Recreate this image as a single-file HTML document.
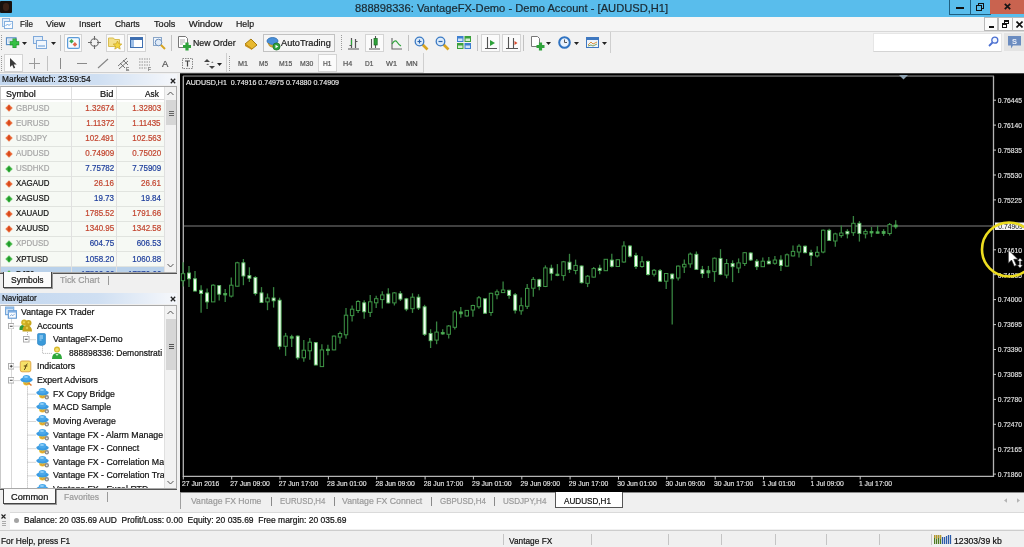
<!DOCTYPE html>
<html><head><meta charset="utf-8"><title>888898336: VantageFX-Demo - Demo Account - [AUDUSD,H1]</title>
<style>
*{box-sizing:border-box;margin:0;padding:0}
html,body{width:1024px;height:547px;overflow:hidden;background:#f0f0f0;font-family:"Liberation Sans",sans-serif;font-size:9.5px;color:#111}
.abs,#root *{position:absolute}
#root{position:relative;width:1024px;height:547px;overflow:hidden;background:#f0f0f0;filter:blur(.3px)}
#root span,#root div{white-space:nowrap}
#root span{-webkit-text-stroke:.22px currentColor}
/* title */
#title{left:0;top:0;width:1024px;height:16.600px;background:#59bdec}
#title .t{left:0;width:1024px;text-align:center;top:1px;font-size:11.4px;color:#1b2a33;letter-spacing:0}
#appicon{left:0;top:1px;width:12px;height:12px;background:#17110d;border-radius:1px}
.wb{top:0;height:14.500px;border:1px solid #1f5f80;border-top:none}
/* menu */
#menu{left:0;top:16.600px;width:1024px;height:15.400px;background:#f5f5f5;border-bottom:1px solid #d8d8d8}
#menu span{top:2px;font-size:9.6px;color:#1a1a1a}
.mdib{top:17px;height:14px;background:#fbfbfb;border:1px solid #b9b9b9}
/* toolbars */
#tb1{left:0;top:32px;width:1024px;height:21px;background:#f2f2f2}
#tb2{left:0;top:53px;width:1024px;height:20px;background:#f2f2f2}
.sep{width:1px;background:#c2c2c2}
.grip{width:2px;border-left:1px dotted #9a9a9a}
.tbtxt{font-size:9.6px;color:#1a1a1a}
.tf{font-size:7.6px;color:#555;top:6px}
.pressed{background:#fbfbfb;border:1px solid #d4d4d4}
/* market watch */
.phead{left:0;width:177px;height:11.500px;background:linear-gradient(90deg,#c3d7ef 0%,#cfdff2 55%,#f2f5fa 95%,#f4f6fa 100%);font-size:9.4px}
.phead span{left:2px;top:0px;color:#111}
.phead .x{left:168px;top:-1px;font-size:9px;font-weight:bold;color:#222}
#mw{left:0;top:86px;width:177px;height:186.500px;background:#fff;border:1px solid #a9a9a9;border-left:1px solid #c9c9c9;overflow:hidden}
#mwh{left:0;top:0;width:163px;height:13px;background:#fff;border-bottom:1px solid #d9d9d9}
#mwh span{top:1px;font-size:9.4px;color:#111}
.mwr{left:0;width:163px;height:15.04px;border-bottom:1px solid #e1e4df;background:#f6f9f4}
.mwr span{top:1.500px;font-size:9.2px}
.mwr .ar{left:3.500px;top:2.800px;width:8px;height:8px}
.mwr .sy{left:15px}
.mwr .bd{right:49.800px;transform:scaleX(.87);transform-origin:100% 0}
.mwr .ak{right:3.100px;transform:scaleX(.87);transform-origin:100% 0}
.vl{width:1px;background:#e0e0e0}
.sb{background:#f2f2f2;border-left:1px solid #e0e0e0}
.thumb{background:#d6d6d6}
.tab{font-size:9.6px}
/* chart */
#chart{left:180px;top:73px;width:844px;height:420px;background:#000}
svg text{font-family:"Liberation Sans",sans-serif}
.pl{font-size:7.6px;fill:#e6e6e6;stroke:#e6e6e6;stroke-width:.15px}
.ax{stroke:#c8c8c8;stroke-width:1}
#cd line{stroke:#378340;stroke-width:1.300}
#cd .f{fill:#f2fff2;stroke:#58b860;stroke-width:.9}
#cd .d{fill:#55b35c;stroke:#4aa851;stroke-width:.8}
#cd .h{fill:#000;stroke:#3d9445;stroke-width:1}
/* navigator */
#nav{left:0;top:304.700px;width:177px;height:184.500px;background:#fff;border:1px solid #a9a9a9;border-left:1px solid #c9c9c9;overflow:hidden}
.nr{left:-1.5px;width:164px;height:14px}
.nr .nt{top:2px;font-size:9.4px;color:#111}
.nr .nic{top:.5px;width:14px;height:13px}
.nr .ni{left:0;top:0;width:14px;height:13px}
.nr .exs{top:4px;width:6.500px;height:6.500px}
/* bottom */
#ctabs{left:180px;top:493px;width:844px;height:16px;background:#f0f0f0;border-left:1px solid #a0a0a0}
#ctabs span{top:2px;font-size:9.6px;color:#9a9a9a}
#term{left:0;top:509px;width:1024px;height:21.500px;background:#f0f0f0;border-bottom:1px solid #cdcdcd}
#term span{top:4px;font-size:9.2px;color:#111}
#status{left:0;top:531px;width:1024px;height:16px;background:#f0f0f0}
#status span{top:3px;font-size:9.4px;color:#111}
</style></head><body>
<div id="root">

<!-- TITLE BAR -->
<div id="title">
  <div id="appicon"><div style="left:3px;top:2px;width:6px;height:8px;border-radius:3px;background:#3a2216"></div></div>
  <span style="left:355.4px;top:1.5px;font-size:10.9px;color:#1b2a33;transform:scaleX(1.023);transform-origin:0 0;">888898336: VantageFX-Demo - Demo Account - [AUDUSD,H1]</span>
  <div class="wb" style="left:949px;width:22px;background:#59bdec"><div style="left:6px;top:7px;width:8px;height:2px;background:#111"></div></div>
  <div class="wb" style="left:970px;width:21px;background:#59bdec">
    <div style="left:7px;top:3px;width:6px;height:6px;border:1px solid #111"></div>
    <div style="left:5px;top:5px;width:6px;height:6px;border:1.500px solid #111;background:#59bdec"></div>
  </div>
  <div class="wb" style="left:990px;width:34px;background:#c9634f;border-color:#c9634f;height:13.500px">
    <svg style="left:13px;top:3px;width:7px;height:7px" viewBox="0 0 7 7"><path d="M.8 .8 L6.200 6.200 M6.200 .8 L.8 6.200" stroke="#151515" stroke-width="1.700"/></svg>
  </div>
</div>

<!-- MENU BAR -->
<div id="menu">
  <svg style="left:2px;top:1.500px;width:11px;height:11px" viewBox="0 0 11 11"><rect x=".5" y=".5" width="7" height="8" fill="#e3eefa" stroke="#8fb8e2"/><rect x="2.500" y="3.500" width="8" height="7" fill="#fafcff" stroke="#86b0de"/><path d="M3.500 8 l2 -2 l1.500 1.500 l2 -2" stroke="#4a90d9" fill="none" stroke-width=".8"/></svg>
  <span style="left:19.5px;top:1.500px;font-size:9.5px;color:#1a1a1a;transform:scaleX(0.849);transform-origin:0 0;">File</span>
  <span style="left:46.2px;top:1.500px;font-size:9.5px;color:#1a1a1a;transform:scaleX(0.945);transform-origin:0 0;">View</span>
  <span style="left:78.7px;top:1.500px;font-size:9.5px;color:#1a1a1a;transform:scaleX(0.918);transform-origin:0 0;">Insert</span>
  <span style="left:114.5px;top:1.500px;font-size:9.5px;color:#1a1a1a;transform:scaleX(0.883);transform-origin:0 0;">Charts</span>
  <span style="left:153.7px;top:1.500px;font-size:9.5px;color:#1a1a1a;transform:scaleX(0.960);transform-origin:0 0;">Tools</span>
  <span style="left:188.7px;top:1.500px;font-size:9.5px;color:#1a1a1a;transform:scaleX(1.000);transform-origin:0 0;">Window</span>
  <span style="left:235.7px;top:1.500px;font-size:9.5px;color:#1a1a1a;transform:scaleX(0.921);transform-origin:0 0;">Help</span>
</div>
<div class="mdib" style="left:984px;width:14px"><div style="left:4px;top:8px;width:5px;height:2px;background:#111"></div></div>
<div class="mdib" style="left:998px;width:15px">
  <div style="left:5px;top:2px;width:5px;height:4px;border:1px solid #111;border-top-width:2px"></div>
  <div style="left:3px;top:5px;width:5px;height:5px;border:1px solid #111;border-top-width:2px;background:#fbfbfb"></div>
</div>
<div class="mdib" style="left:1012px;width:13px"><svg style="left:3px;top:3px;width:7px;height:7px" viewBox="0 0 7 7"><path d="M.5 .5 L6.500 6.500 M6.500 .5 L.5 6.500" stroke="#111" stroke-width="1.600"/></svg></div>

<!-- TOOLBAR 1 -->
<div id="tb1">
  <div class="grip" style="left:1px;top:3px;height:15px"></div>
  <!-- new chart -->
  <svg style="left:5px;top:4px;width:16px;height:15px" viewBox="0 0 16 15"><rect x="1.500" y="1.800" width="9.500" height="6.800" fill="#f4f8fd" stroke="#5b8fc7" stroke-width="1.200"/><path d="M3 4 h4 M3 6 h2" stroke="#9ab8dc" stroke-width=".8"/><path d="M4.800 7.200 h9.400 M9.500 2.500 v9.400" stroke="#1f8a2a" stroke-width="4"/><path d="M5.300 7.200 h8.400 M9.500 3 v8.400" stroke="#35c044" stroke-width="2.800"/></svg>
  <svg style="left:22px;top:10px;width:5px;height:3px" viewBox="0 0 5 3"><path d="M0 0 h5 l-2.500 3z" fill="#222"/></svg>
  <!-- profiles -->
  <svg style="left:33px;top:4px;width:15px;height:14px" viewBox="0 0 15 14"><rect x=".5" y=".5" width="9" height="7" fill="#e2edf9" stroke="#7fa9da"/><rect x="3.500" y="4.500" width="10" height="8" fill="#f2f7fd" stroke="#7fa9da"/><rect x="5" y="9" width="7" height="2" fill="#a9c8ea"/></svg>
  <svg style="left:51px;top:10px;width:5px;height:3px" viewBox="0 0 5 3"><path d="M0 0 h5 l-2.500 3z" fill="#222"/></svg>
  <div class="sep" style="left:60px;top:3px;height:16px"></div>
  <!-- market watch pressed -->
  <div class="pressed" style="left:64px;top:2px;width:18px;height:18px"></div>
  <svg style="left:67px;top:5px;width:13px;height:12px" viewBox="0 0 13 12"><rect x=".6" y=".6" width="11.800" height="10.800" rx="1.500" fill="#f6faff" stroke="#5b9bd8" stroke-width="1.200"/><path d="M2.200 4.300 l2.300 -2.300 l2.300 2.300 l-2.300 2.300z" fill="#3aa848"/><path d="M5.600 7.400 l2.300 -2.300 l2.300 2.300 l-2.300 2.300z" fill="#e0684a"/></svg>
  <!-- data window (crosshair circle) -->
  <svg style="left:88px;top:4px;width:13px;height:13px" viewBox="0 0 13 13"><circle cx="6.500" cy="6.500" r="3.800" fill="none" stroke="#6a6a6a" stroke-width="1.100"/><path d="M6.500 0 v4 M6.500 9 v4 M0 6.500 h4 M9 6.500 h4" stroke="#6a6a6a" stroke-width="1.100"/></svg>
  <!-- navigator (pressed, folder star) -->
  <div class="pressed" style="left:106px;top:2px;width:19px;height:18px"></div>
  <svg style="left:108px;top:4px;width:15px;height:14px" viewBox="0 0 15 14"><path d="M.5 2 h5 l1 1.500 h5 v7 h-11z" fill="#f4e08a" stroke="#d8bc50"/><path d="M9.500 5 l1.300 2.800 3 .3 -2.300 2 .7 3 -2.700 -1.600 -2.700 1.600 .7 -3 -2.300 -2 3 -.3z" fill="#f2d43c" stroke="#c8a020" stroke-width=".7"/></svg>
  <!-- terminal (pressed) -->
  <div class="pressed" style="left:127px;top:2px;width:19px;height:18px"></div>
  <svg style="left:130px;top:5px;width:13px;height:12px" viewBox="0 0 13 12"><rect x=".5" y=".5" width="12" height="10" fill="#fff" stroke="#3f6fb0"/><rect x="1" y="1" width="11" height="2" fill="#3f6fb0"/><rect x="1" y="3" width="3" height="7" fill="#9fc0e8"/></svg>
  <!-- strategy tester -->
  <svg style="left:152px;top:4px;width:14px;height:14px" viewBox="0 0 14 14"><rect x="1.500" y="1.500" width="8" height="8" fill="#eef4fb" stroke="#8aa6c8"/><circle cx="6.500" cy="6.500" r="3.300" fill="#dfeaf7" stroke="#6a8fbf"/><path d="M9 9 l4 4" stroke="#d9a520" stroke-width="2"/></svg>
  <div class="sep" style="left:171px;top:3px;height:16px"></div>
  <!-- new order -->
  <svg style="left:178px;top:4px;width:14px;height:15px" viewBox="0 0 14 15"><path d="M.5 .5 h7 l2 2 v9 h-9z" fill="#fff" stroke="#777"/><path d="M2 4 h5 M2 6 h5 M2 8 h3" stroke="#999" stroke-width=".8"/><path d="M5 10.500 h8 M9 6.500 v8" stroke="#2ea23a" stroke-width="3.200"/></svg>
  <span style="left:193.0px;top:4.5px;font-size:9.4px;color:#1a1a1a;transform:scaleX(0.940);transform-origin:0 0;">New Order</span>
  <svg style="left:244px;top:6px;width:14px;height:12px" viewBox="0 0 14 12"><path d="M1 6 l6 -5 6 6 -5 4z" fill="#e8b930" stroke="#a87c10"/><path d="M1 6 v2 l7 4 v-1.500z" fill="#c89018"/></svg>
  <!-- autotrading -->
  <div class="pressed" style="left:263px;top:2px;width:72px;height:18px;background:#f6f6f6;border-color:#c2c2c2"></div>
  <svg style="left:266px;top:4px;width:15px;height:15px" viewBox="0 0 15 15"><ellipse cx="6.500" cy="5" rx="5.500" ry="3.500" fill="#4a90d9" stroke="#1c5fa8" stroke-width=".7"/><path d="M2 7 q4.500 5 9 0 l-1.500 3 q-3 2.500 -6 0z" fill="#e8bc3a" stroke="#a87c10" stroke-width=".6"/><circle cx="10.500" cy="10.500" r="3.600" fill="#2ea23a" stroke="#1a6a22" stroke-width=".7"/><path d="M9.500 8.800 v3.400 l2.800 -1.700z" fill="#fff"/></svg>
  <span style="left:281.0px;top:4.5px;font-size:9.4px;color:#1a1a1a;transform:scaleX(0.983);transform-origin:0 0;">AutoTrading</span>
  <div class="grip" style="left:341px;top:3px;height:15px"></div>
  <!-- bar chart -->
  <svg style="left:348px;top:5px;width:11px;height:13px" viewBox="0 0 11 13"><path d="M3.500 1 v10 M1.500 8.500 h2 M7.500 2 v9 M7.500 4.500 h2" stroke="#555" stroke-width="1.200" fill="none"/><path d="M0 12 h11" stroke="#555" stroke-width="1"/><path d="M3.500 3 v5" stroke="#2ea23a" stroke-width="1.200"/></svg>
  <!-- candles pressed -->
  <div class="pressed" style="left:365px;top:2px;width:19px;height:18px"></div>
  <svg style="left:369px;top:4px;width:11px;height:14px" viewBox="0 0 11 14"><path d="M2.500 3 v9 M6.500 0 v12 M0 13 h11" stroke="#555" stroke-width="1.100"/><rect x="5" y="2.500" width="3.200" height="6.500" fill="#2ea23a" stroke="#1a6a22" stroke-width=".7"/></svg>
  <!-- line chart -->
  <svg style="left:390px;top:5px;width:13px;height:13px" viewBox="0 0 13 13"><path d="M2 1 v11 h10" stroke="#666" stroke-width="1.100" fill="none"/><path d="M2 7 q3 -5 5 -2 t4 4" stroke="#2ea23a" stroke-width="1.200" fill="none"/></svg>
  <div class="sep" style="left:408px;top:3px;height:16px"></div>
  <!-- zoom in -->
  <svg style="left:414px;top:4px;width:15px;height:15px" viewBox="0 0 15 15"><path d="M8.500 8.500 l5 5" stroke="#d9a520" stroke-width="2.600"/><circle cx="5.500" cy="5.500" r="4.300" fill="#dcebfa" stroke="#3b7ac4" stroke-width="1.300"/><path d="M3.500 5.500 h4 M5.500 3.500 v4" stroke="#2a64ad" stroke-width="1.200"/></svg>
  <!-- zoom out -->
  <svg style="left:435px;top:4px;width:15px;height:15px" viewBox="0 0 15 15"><path d="M8.500 8.500 l5 5" stroke="#d9a520" stroke-width="2.600"/><circle cx="5.500" cy="5.500" r="4.300" fill="#dcebfa" stroke="#3b7ac4" stroke-width="1.300"/><path d="M3.500 5.500 h4" stroke="#2a64ad" stroke-width="1.200"/></svg>
  <!-- tile -->
  <svg style="left:457px;top:4px;width:14px;height:13px" viewBox="0 0 14 13"><rect x="0" y="0" width="6.500" height="6" fill="#3d7fd0"/><rect x="7.500" y="0" width="6.500" height="6" fill="#3aa03a"/><rect x="0" y="7" width="6.500" height="6" fill="#3aa03a"/><rect x="7.500" y="7" width="6.500" height="6" fill="#3d7fd0"/><rect x="1" y="2.500" width="4.500" height="2.500" fill="#cfe2f6"/><rect x="8.500" y="2.500" width="4.500" height="2.500" fill="#d4ecd2"/><rect x="1" y="9.500" width="4.500" height="2.500" fill="#d4ecd2"/><rect x="8.500" y="9.500" width="4.500" height="2.500" fill="#cfe2f6"/></svg>
  <div class="sep" style="left:477px;top:3px;height:16px"></div>
  <!-- autoscroll pressed -->
  <div class="pressed" style="left:481px;top:2px;width:19px;height:18px"></div>
  <svg style="left:485px;top:5px;width:12px;height:13px" viewBox="0 0 12 13"><path d="M2.500 0 v11 M0 11.500 h12" stroke="#555" stroke-width="1.100"/><path d="M5 3 v6 l5 -3z" fill="#2ea23a"/></svg>
  <!-- chart shift pressed -->
  <div class="pressed" style="left:502px;top:2px;width:19px;height:18px"></div>
  <svg style="left:506px;top:5px;width:12px;height:13px" viewBox="0 0 12 13"><path d="M2.500 0 v11 M7.500 1 v10 M0 11.500 h12" stroke="#555" stroke-width="1.100"/><path d="M8.500 4 v4 l3 -2z" fill="#d9482a"/></svg>
  <div class="sep" style="left:523px;top:3px;height:16px"></div>
  <!-- indicators -->
  <svg style="left:531px;top:4px;width:15px;height:15px" viewBox="0 0 15 15"><path d="M.5 .5 h6 l2 2 v8 h-8z" fill="#fff" stroke="#777"/><path d="M5.500 10.500 h8 M9.500 6.500 v8" stroke="#2ea23a" stroke-width="3.200"/></svg>
  <svg style="left:546px;top:10px;width:5px;height:3px" viewBox="0 0 5 3"><path d="M0 0 h5 l-2.500 3z" fill="#222"/></svg>
  <!-- periods clock -->
  <svg style="left:558px;top:4px;width:13px;height:13px" viewBox="0 0 13 13"><circle cx="6.500" cy="6.500" r="5.300" fill="#e9f2fc" stroke="#2f73c2" stroke-width="2"/><path d="M6.500 3.500 v3 h2.500" stroke="#555" stroke-width="1" fill="none"/></svg>
  <svg style="left:574px;top:10px;width:5px;height:3px" viewBox="0 0 5 3"><path d="M0 0 h5 l-2.500 3z" fill="#222"/></svg>
  <!-- templates -->
  <svg style="left:586px;top:5px;width:13px;height:11px" viewBox="0 0 13 11"><rect x=".5" y=".5" width="12" height="10" fill="#eef4fb" stroke="#3f78c0"/><rect x="1" y="1" width="11" height="2" fill="#3f78c0"/><path d="M2 8 l3 -3 2 2 4 -2" stroke="#d9882a" stroke-width=".9" fill="none"/><path d="M2 9 l3 -1 2 1 4 -2" stroke="#5a8a3a" stroke-width=".8" fill="none"/></svg>
  <svg style="left:602px;top:10px;width:5px;height:3px" viewBox="0 0 5 3"><path d="M0 0 h5 l-2.500 3z" fill="#222"/></svg>
  <div class="sep" style="left:610px;top:0px;height:21px;background:#cfcfcf"></div>
  <div style="left:0;top:20.500px;width:611px;height:1px;background:#cfcfcf"></div>
  <!-- search -->
  <div style="left:873px;top:1px;width:129px;height:18.500px;background:#fff;border:1px solid #e6e6e6;border-bottom-color:#d4d4d4"></div>
  <svg style="left:988px;top:4px;width:11px;height:11px" viewBox="0 0 11 11"><circle cx="6.800" cy="4.200" r="3" fill="#f4f8ff" stroke="#4a6fd0" stroke-width="1.300"/><path d="M4.500 6.500 l-3.500 3.500" stroke="#4a6fd0" stroke-width="1.800"/></svg>
  <div style="left:1004px;top:1px;width:20px;height:18px;background:#e4e4e4"></div>
  <svg style="left:1008px;top:4px;width:13px;height:13px" viewBox="0 0 13 13"><path d="M0 0 h13 v9.500 h-8 l-2 3 v-3 h-3z" fill="#6b8cc0"/><text x="4" y="8" font-size="7.500" font-weight="bold" fill="#e8eef8">S</text></svg>
</div>

<!-- TOOLBAR 2 -->
<div id="tb2">
  <div class="grip" style="left:1px;top:3px;height:15px"></div>
  <div class="pressed" style="left:4px;top:1px;width:19px;height:18px"></div>
  <svg style="left:9px;top:5px;width:8px;height:11px" viewBox="0 0 8 11"><path d="M1 0 v9 l2.200 -2 1.500 3.500 1.500 -.7 -1.500 -3.300 h3z" fill="#3a3a3a"/></svg>
  <svg style="left:29px;top:5px;width:11px;height:11px" viewBox="0 0 11 11"><path d="M5.500 0 v11 M0 5.500 h11" stroke="#999" stroke-width="1"/></svg>
  <div class="sep" style="left:47px;top:3px;height:15px"></div>
  <div style="left:60px;top:5px;width:1px;height:11px;background:#8a8a8a"></div>
  <div style="left:77px;top:10px;width:10px;height:1px;background:#8a8a8a"></div>
  <svg style="left:97px;top:5px;width:12px;height:11px" viewBox="0 0 12 11"><path d="M1 10 L11 1" stroke="#858585" stroke-width="1.100"/></svg>
  <svg style="left:117px;top:4px;width:14px;height:14px" viewBox="0 0 14 14"><path d="M1 9 L10 1 M2 12 L11 4 M3 6 l5 5 M6 3 l5 5" stroke="#666" stroke-width=".9"/><text x="9" y="14" font-size="5" fill="#444">E</text></svg>
  <svg style="left:139px;top:5px;width:13px;height:13px" viewBox="0 0 13 13"><path d="M0 1 h11 M0 4 h11 M0 7 h11 M0 10 h8" stroke="#888" stroke-width=".9" stroke-dasharray="1.500 1"/><text x="9" y="13" font-size="5" fill="#444">F</text></svg>
  <span class="tbtxt" style="left:162px;top:5px;font-size:9.500px;color:#555">A</span>
  <svg style="left:182px;top:5px;width:11px;height:11px" viewBox="0 0 11 11"><rect x=".5" y=".5" width="10" height="10" fill="none" stroke="#888" stroke-dasharray="1.500 1"/><path d="M3 3 h5 M5.500 3 v5.500" stroke="#444" stroke-width="1.200"/></svg>
  <svg style="left:204px;top:6px;width:11px;height:10px" viewBox="0 0 11 10"><path d="M0 3 l3 -3 3 3z" fill="#444"/><path d="M5 7 l3 3 3 -3z" fill="#444"/><path d="M2 6 l2 -1.500 1 1.500z M7 3.500 l1.500 -1 1 1.500z" fill="#666"/></svg>
  <svg style="left:217px;top:10px;width:5px;height:3px" viewBox="0 0 5 3"><path d="M0 0 h5 l-2.500 3z" fill="#222"/></svg>
  <div class="sep" style="left:226px;top:0;height:19px;background:#cfcfcf"></div><div class="grip" style="left:229px;top:3px;height:15px"></div>
  <span style="left:237.5px;top:6px;font-size:7.6px;color:#555;transform:scaleX(0.947);transform-origin:0 0;">M1</span>
  <span style="left:259.0px;top:6px;font-size:7.6px;color:#555;transform:scaleX(0.852);transform-origin:0 0;">M5</span>
  <span style="left:278.5px;top:6px;font-size:7.6px;color:#555;transform:scaleX(0.893);transform-origin:0 0;">M15</span>
  <span style="left:299.7px;top:6px;font-size:7.6px;color:#555;transform:scaleX(0.900);transform-origin:0 0;">M30</span>
  <div class="pressed" style="left:318px;top:1px;width:19px;height:18px"></div>
  <span style="left:323.0px;top:6px;font-size:7.6px;color:#555;transform:scaleX(0.875);transform-origin:0 0;">H1</span>
  <span style="left:343.0px;top:6px;font-size:7.6px;color:#555;transform:scaleX(0.947);transform-origin:0 0;">H4</span>
  <span style="left:365.2px;top:6px;font-size:7.6px;color:#555;transform:scaleX(0.854);transform-origin:0 0;">D1</span>
  <span style="left:385.5px;top:6px;font-size:7.6px;color:#555;transform:scaleX(0.965);transform-origin:0 0;">W1</span>
  <span style="left:405.5px;top:6px;font-size:7.6px;color:#555;transform:scaleX(0.990);transform-origin:0 0;">MN</span>
  <div class="sep" style="left:423px;top:0px;height:19px;background:#cfcfcf"></div>
  <div style="left:0;top:19px;width:424px;height:1px;background:#cfcfcf"></div>
</div>

<!-- MARKET WATCH -->
<div class="phead" style="top:73.500px"><span style="left:2.0px;top:0.5px;font-size:9.2px;color:#111;transform:scaleX(0.911);transform-origin:0 0;">Market Watch: 23:59:54</span><svg style="left:169.500px;top:4px;width:6px;height:6px" viewBox="0 0 6 6"><path d="M.8 .8 L5.200 5.200 M5.200 .8 L.8 5.200" stroke="#222" stroke-width="1.300"/></svg></div>
<div id="mw">
  <div id="mwh"><span style="left:4.9px;top:1.5px;font-size:9.2px;color:#111;transform:scaleX(0.971);transform-origin:0 0;">Symbol</span><span style="left:99.0px;top:1.5px;font-size:9.2px;color:#111;transform:scaleX(1.008);transform-origin:0 0;">Bid</span><span style="left:144.0px;top:1.5px;font-size:9.2px;color:#111;transform:scaleX(0.900);transform-origin:0 0;">Ask</span></div>
  <div style="left:0;top:0px;width:163px;height:184px">
<div class="mwr" style="top:14.60px"><svg class="ar" viewBox="0 0 10 10"><path d="M5 .3 L9.700 5 L5 9.700 L.3 5Z" fill="#ee7a4a"/><path d="M2 4.500 L5 8.500 L8 4.500 L6.200 4.500 L6.200 1.800 L3.800 1.800 L3.800 4.500Z" fill="#d8481c"/></svg><span style="left:14.7px;top:1.5px;font-size:9.2px;color:#a6a6a6;transform:scaleX(0.86);transform-origin:0 0;">GBPUSD</span><span class="bd" style="color:#c2452f">1.32674</span><span class="ak" style="color:#c2452f">1.32803</span></div>
<div class="mwr" style="top:29.64px"><svg class="ar" viewBox="0 0 10 10"><path d="M5 .3 L9.700 5 L5 9.700 L.3 5Z" fill="#ee7a4a"/><path d="M2 4.500 L5 8.500 L8 4.500 L6.200 4.500 L6.200 1.800 L3.800 1.800 L3.800 4.500Z" fill="#d8481c"/></svg><span style="left:14.7px;top:1.5px;font-size:9.2px;color:#a6a6a6;transform:scaleX(0.86);transform-origin:0 0;">EURUSD</span><span class="bd" style="color:#c2452f">1.11372</span><span class="ak" style="color:#c2452f">1.11435</span></div>
<div class="mwr" style="top:44.68px"><svg class="ar" viewBox="0 0 10 10"><path d="M5 .3 L9.700 5 L5 9.700 L.3 5Z" fill="#ee7a4a"/><path d="M2 4.500 L5 8.500 L8 4.500 L6.200 4.500 L6.200 1.800 L3.800 1.800 L3.800 4.500Z" fill="#d8481c"/></svg><span style="left:14.7px;top:1.5px;font-size:9.2px;color:#a6a6a6;transform:scaleX(0.86);transform-origin:0 0;">USDJPY</span><span class="bd" style="color:#c2452f">102.491</span><span class="ak" style="color:#c2452f">102.563</span></div>
<div class="mwr" style="top:59.72px"><svg class="ar" viewBox="0 0 10 10"><path d="M5 .3 L9.700 5 L5 9.700 L.3 5Z" fill="#ee7a4a"/><path d="M2 4.500 L5 8.500 L8 4.500 L6.200 4.500 L6.200 1.800 L3.800 1.800 L3.800 4.500Z" fill="#d8481c"/></svg><span style="left:14.7px;top:1.5px;font-size:9.2px;color:#a6a6a6;transform:scaleX(0.86);transform-origin:0 0;">AUDUSD</span><span class="bd" style="color:#c2452f">0.74909</span><span class="ak" style="color:#c2452f">0.75020</span></div>
<div class="mwr" style="top:74.76px"><svg class="ar" viewBox="0 0 10 10"><path d="M5 .3 L9.700 5 L5 9.700 L.3 5Z" fill="#5cc25c"/><path d="M2 5.500 L5 1.500 L8 5.500 L6.200 5.500 L6.200 8.200 L3.800 8.200 L3.800 5.500Z" fill="#1f9a2c"/></svg><span style="left:14.7px;top:1.5px;font-size:9.2px;color:#a6a6a6;transform:scaleX(0.86);transform-origin:0 0;">USDHKD</span><span class="bd" style="color:#1f3f9c">7.75782</span><span class="ak" style="color:#1f3f9c">7.75909</span></div>
<div class="mwr" style="top:89.80px"><svg class="ar" viewBox="0 0 10 10"><path d="M5 .3 L9.700 5 L5 9.700 L.3 5Z" fill="#ee7a4a"/><path d="M2 4.500 L5 8.500 L8 4.500 L6.200 4.500 L6.200 1.800 L3.800 1.800 L3.800 4.500Z" fill="#d8481c"/></svg><span style="left:14.7px;top:1.5px;font-size:9.2px;color:#111;transform:scaleX(0.86);transform-origin:0 0;">XAGAUD</span><span class="bd" style="color:#c2452f">26.16</span><span class="ak" style="color:#c2452f">26.61</span></div>
<div class="mwr" style="top:104.84px"><svg class="ar" viewBox="0 0 10 10"><path d="M5 .3 L9.700 5 L5 9.700 L.3 5Z" fill="#5cc25c"/><path d="M2 5.500 L5 1.500 L8 5.500 L6.200 5.500 L6.200 8.200 L3.800 8.200 L3.800 5.500Z" fill="#1f9a2c"/></svg><span style="left:14.7px;top:1.5px;font-size:9.2px;color:#111;transform:scaleX(0.86);transform-origin:0 0;">XAGUSD</span><span class="bd" style="color:#1f3f9c">19.73</span><span class="ak" style="color:#1f3f9c">19.84</span></div>
<div class="mwr" style="top:119.88px"><svg class="ar" viewBox="0 0 10 10"><path d="M5 .3 L9.700 5 L5 9.700 L.3 5Z" fill="#ee7a4a"/><path d="M2 4.500 L5 8.500 L8 4.500 L6.200 4.500 L6.200 1.800 L3.800 1.800 L3.800 4.500Z" fill="#d8481c"/></svg><span style="left:14.7px;top:1.5px;font-size:9.2px;color:#111;transform:scaleX(0.86);transform-origin:0 0;">XAUAUD</span><span class="bd" style="color:#c2452f">1785.52</span><span class="ak" style="color:#c2452f">1791.66</span></div>
<div class="mwr" style="top:134.92px"><svg class="ar" viewBox="0 0 10 10"><path d="M5 .3 L9.700 5 L5 9.700 L.3 5Z" fill="#ee7a4a"/><path d="M2 4.500 L5 8.500 L8 4.500 L6.200 4.500 L6.200 1.800 L3.800 1.800 L3.800 4.500Z" fill="#d8481c"/></svg><span style="left:14.7px;top:1.5px;font-size:9.2px;color:#111;transform:scaleX(0.86);transform-origin:0 0;">XAUUSD</span><span class="bd" style="color:#c2452f">1340.95</span><span class="ak" style="color:#c2452f">1342.58</span></div>
<div class="mwr" style="top:149.96px"><svg class="ar" viewBox="0 0 10 10"><path d="M5 .3 L9.700 5 L5 9.700 L.3 5Z" fill="#5cc25c"/><path d="M2 5.500 L5 1.500 L8 5.500 L6.200 5.500 L6.200 8.200 L3.800 8.200 L3.800 5.500Z" fill="#1f9a2c"/></svg><span style="left:14.7px;top:1.5px;font-size:9.2px;color:#a6a6a6;transform:scaleX(0.86);transform-origin:0 0;">XPDUSD</span><span class="bd" style="color:#1f3f9c">604.75</span><span class="ak" style="color:#1f3f9c">606.53</span></div>
<div class="mwr" style="top:165.00px"><svg class="ar" viewBox="0 0 10 10"><path d="M5 .3 L9.700 5 L5 9.700 L.3 5Z" fill="#5cc25c"/><path d="M2 5.500 L5 1.500 L8 5.500 L6.200 5.500 L6.200 8.200 L3.800 8.200 L3.800 5.500Z" fill="#1f9a2c"/></svg><span style="left:14.7px;top:1.5px;font-size:9.2px;color:#111;transform:scaleX(0.86);transform-origin:0 0;">XPTUSD</span><span class="bd" style="color:#1f3f9c">1058.20</span><span class="ak" style="color:#1f3f9c">1060.88</span></div>
<div class="mwr" style="top:180.04px;background:#b9d1ea"><svg class="ar" viewBox="0 0 10 10"><path d="M5 .3 L9.700 5 L5 9.700 L.3 5Z" fill="#5cc25c"/><path d="M2 5.500 L5 1.500 L8 5.500 L6.200 5.500 L6.200 8.200 L3.800 8.200 L3.800 5.500Z" fill="#1f9a2c"/></svg><span style="left:14.7px;top:1.5px;font-size:9.2px;color:#111;transform:scaleX(0.86);transform-origin:0 0;">DJ30</span><span class="bd" style="color:#1f3f9c">17866.00</span><span class="ak" style="color:#1f3f9c">17870.00</span></div>
  </div>
  <div class="vl" style="left:69.500px;top:0;height:187px"></div>
  <div class="vl" style="left:115.300px;top:0;height:187px"></div>
  <div class="sb" style="left:162.500px;top:0;width:13.500px;height:187px">
    <svg style="left:2.500px;top:4px;width:7px;height:5px" viewBox="0 0 7 5"><path d="M.5 4 L3.500 1 L6.500 4" stroke="#555" fill="none" stroke-width="1"/></svg>
    <div class="thumb" style="left:1px;top:12.500px;width:11px;height:25px"></div>
    <div style="left:4px;top:23.500px;width:5px;height:1px;background:#666"></div>
    <div style="left:4px;top:25.500px;width:5px;height:1px;background:#666"></div>
    <div style="left:4px;top:27.500px;width:5px;height:1px;background:#666"></div>
    <svg style="left:2.500px;top:176px;width:7px;height:5px" viewBox="0 0 7 5"><path d="M.5 1 L3.500 4 L6.500 1" stroke="#555" fill="none" stroke-width="1"/></svg>
  </div>
</div>
<!-- MW tabs -->
<div style="left:0;top:272.500px;width:177px;height:20px;background:#f0f0f0;border-top:1px solid #555"></div>
<div style="left:2.500px;top:272px;width:49px;height:15.500px;background:#fbfbfb;border:1px solid #444;border-top:none;box-shadow:1px 1px 0 #999"></div>
<span style="left:10.9px;top:274px;font-size:9.4px;color:#111;transform:scaleX(0.904);transform-origin:0 0;">Symbols</span>
<span style="left:60.0px;top:274px;font-size:9.4px;color:#9a9a9a;transform:scaleX(0.935);transform-origin:0 0;">Tick Chart</span>
<div style="left:107.500px;top:275.600px;width:1px;height:9.500px;background:#9a9a9a"></div>

<!-- NAVIGATOR -->
<div class="phead" style="top:292.800px"><span style="left:2.4px;top:0.5px;font-size:9.2px;color:#111;transform:scaleX(0.881);transform-origin:0 0;">Navigator</span><svg style="left:169.500px;top:4px;width:6px;height:6px;margin-top:-1.300px" viewBox="0 0 6 6"><path d="M.8 .8 L5.200 5.200 M5.200 .8 L.8 5.200" stroke="#222" stroke-width="1.300"/></svg></div>
<div id="nav">
<svg style="left:-1px;top:0;width:163px;height:185px" viewBox="0 0 163 185"><g stroke="#b0b0b0" stroke-width="1" stroke-dasharray="1 1" fill="none"><path d="M11.500 12.5 V185"/><path d="M14.500 20.1 H20"/><path d="M14.500 61.0 H20"/><path d="M14.500 74.6 H20"/><path d="M27.500 26.1 V30.2"/><path d="M30.500 33.7 H36"/><path d="M42.500 39.7 V47.4 H52"/><path d="M27.500 80.6 V185"/><path d="M27.500 88.2 H36"/><path d="M27.500 101.8 H36"/><path d="M27.500 115.5 H36"/><path d="M27.500 129.1 H36"/><path d="M27.500 142.7 H36"/><path d="M27.500 156.3 H36"/><path d="M27.500 169.9 H36"/><path d="M27.500 183.6 H36"/></g></svg>
<div class="nr" style="top:-0.70px"><span class="nic" style="left:4.2px"><svg class="ni" viewBox="0 0 13 12"><rect x="1.5" y="1" width="7.5" height="7" fill="#e6f0fb" stroke="#6aa0d8"/><rect x="1.5" y="1" width="7.5" height="2" fill="#8fbbe8"/><rect x="4" y="4.300" width="7.500" height="7" fill="#fbfdff" stroke="#5b94d0"/><rect x="4" y="4.300" width="7.500" height="1.800" fill="#7fb0e4"/><path d="M5.500 9.500 l1.500 -1.500 l1.200 1 l1.800 -1.800" stroke="#6a9ad0" fill="none" stroke-width=".8"/></svg></span><span style="left:21.7px;top:2px;font-size:9.2px;color:#111;transform:scaleX(0.955);transform-origin:0 0;">Vantage FX Trader</span></div>
<div class="nr" style="top:12.92px"><svg class="exs" style="left:8px" viewBox="0 0 7 7"><rect x=".5" y=".5" width="6" height="6" fill="#fff" stroke="#a8a8a8"/><path d="M2 3.500 h3" stroke="#333" stroke-width="1"/></svg><span class="nic" style="left:19.8px"><svg class="ni" viewBox="0 0 14 13"><path d="M0.500 11 q-.5 -4.500 3 -5 q3 .5 2.500 5z" fill="#2e9a38"/><circle cx="5.200" cy="3.600" r="3" fill="#d4b428"/><circle cx="9.500" cy="4" r="3" fill="#c8a820"/><path d="M3.500 12.500 q-.5 -6 4 -6.500 q5.500 .5 5.500 6.500z" fill="#c4a21c"/><circle cx="5" cy="3.200" r="1" fill="#f0dc60"/><circle cx="9.500" cy="3.500" r="1" fill="#ecd650"/><circle cx="8" cy="9" r="1.200" fill="#e4cc48"/></svg></span><span style="left:37.5px;top:2px;font-size:9.2px;color:#111;transform:scaleX(0.955);transform-origin:0 0;">Accounts</span></div>
<div class="nr" style="top:26.54px"><svg class="exs" style="left:23.8px" viewBox="0 0 7 7"><rect x=".5" y=".5" width="6" height="6" fill="#fff" stroke="#a8a8a8"/><path d="M2 3.500 h3" stroke="#333" stroke-width="1"/></svg><span class="nic" style="left:35.8px"><svg class="ni" viewBox="0 0 14 13"><path d="M2.500 1.800 q0 -1.300 1.300 -1.300 h5.400 q1.300 0 1.300 1.300 v8.400 q0 2 -4 2.300 q-4 -.3 -4 -2.300z" fill="#3a9ad9" stroke="#2a7fc0" stroke-width=".6"/><rect x="4.500" y="2.500" width="3.500" height="1" fill="#bfe2fb"/><rect x="4.500" y="4.500" width="3.500" height="1" fill="#bfe2fb"/><rect x="4.500" y="6.500" width="2" height="1" fill="#9fd0f4"/></svg></span><span style="left:53.2px;top:2px;font-size:9.2px;color:#111;transform:scaleX(0.955);transform-origin:0 0;">VantageFX-Demo</span></div>
<div class="nr" style="top:40.16px"><span class="nic" style="left:51.5px"><svg class="ni" viewBox="0 0 14 13"><circle cx="6" cy="3.500" r="3" fill="#d8b82a"/><circle cx="6" cy="3.800" r="1.800" fill="#f2e070"/><path d="M1 13 q0 -6 5 -6 q5 0 5 6z" fill="#2ea83a"/><path d="M4.500 8 l1.500 2 l1.500 -2z" fill="#d8f0d0"/></svg></span><span style="left:69.9px;top:2px;font-size:9.2px;color:#111;transform:scaleX(0.925);transform-origin:0 0;">888898336: Demonstrati</span></div>
<div class="nr" style="top:53.78px"><svg class="exs" style="left:8px" viewBox="0 0 7 7"><rect x=".5" y=".5" width="6" height="6" fill="#fff" stroke="#a8a8a8"/><path d="M2 3.500 h3 M3.500 2 v3" stroke="#333" stroke-width="1"/></svg><span class="nic" style="left:19.6px"><svg class="ni" viewBox="0 0 14 13"><rect x="1.300" y="1" width="10.500" height="10.800" rx="1.800" fill="#f6e068" stroke="#e0a848" stroke-width="1"/><path d="M5 9.800 q1.200 -.2 1.600 -2.800 q.4 -3 2 -3.200 M4.800 6 h3.600" stroke="#5a4410" fill="none" stroke-width="1"/></svg></span><span style="left:37.5px;top:2px;font-size:9.2px;color:#111;transform:scaleX(0.955);transform-origin:0 0;">Indicators</span></div>
<div class="nr" style="top:67.40px"><svg class="exs" style="left:8px" viewBox="0 0 7 7"><rect x=".5" y=".5" width="6" height="6" fill="#fff" stroke="#a8a8a8"/><path d="M2 3.500 h3" stroke="#333" stroke-width="1"/></svg><span class="nic" style="left:20.2px"><svg class="ni" viewBox="0 0 14 13"><path d="M3 8 q0 3.500 3.500 3.500 q3.500 0 3.500 -3.500 l-3.500 -1z" fill="#ecc83a"/><path d="M4.500 9.500 q2 1.500 4 0" stroke="#d8882a" stroke-width="1" fill="none"/><ellipse cx="6.500" cy="5.800" rx="6.200" ry="2.600" fill="#3a9ae0"/><ellipse cx="6.500" cy="3.800" rx="3.800" ry="2.800" fill="#4aa8ea"/><ellipse cx="6" cy="3" rx="2" ry="1" fill="#8fd0f8"/><path d="M8.500 9 l3 2.500" stroke="#e07a30" stroke-width="1.600"/></svg></span><span style="left:37.5px;top:2px;font-size:9.2px;color:#111;transform:scaleX(0.955);transform-origin:0 0;">Expert Advisors</span></div>
<div class="nr" style="top:81.02px"><span class="nic" style="left:36px"><svg class="ni" viewBox="0 0 14 13"><path d="M3 8 q0 3.500 3.500 3.500 q3.500 0 3.500 -3.500 l-3.500 -1z" fill="#ecc83a"/><path d="M4.500 9.500 q2 1.500 4 0" stroke="#d8882a" stroke-width="1" fill="none"/><ellipse cx="6.500" cy="5.800" rx="6.200" ry="2.600" fill="#3a9ae0"/><ellipse cx="6.500" cy="3.800" rx="3.800" ry="2.800" fill="#4aa8ea"/><ellipse cx="6" cy="3" rx="2" ry="1" fill="#8fd0f8"/><circle cx="10.800" cy="10.300" r="2.200" fill="#8a8a8a"/><circle cx="10.800" cy="10.300" r=".9" fill="#e8e8e8"/></svg></span><span style="left:53.2px;top:2px;font-size:9.2px;color:#111;transform:scaleX(0.955);transform-origin:0 0;">FX Copy Bridge</span></div>
<div class="nr" style="top:94.64px"><span class="nic" style="left:36px"><svg class="ni" viewBox="0 0 14 13"><path d="M3 8 q0 3.500 3.500 3.500 q3.500 0 3.500 -3.500 l-3.500 -1z" fill="#ecc83a"/><path d="M4.500 9.500 q2 1.500 4 0" stroke="#d8882a" stroke-width="1" fill="none"/><ellipse cx="6.500" cy="5.800" rx="6.200" ry="2.600" fill="#3a9ae0"/><ellipse cx="6.500" cy="3.800" rx="3.800" ry="2.800" fill="#4aa8ea"/><ellipse cx="6" cy="3" rx="2" ry="1" fill="#8fd0f8"/><circle cx="10.800" cy="10.300" r="2.200" fill="#8a8a8a"/><circle cx="10.800" cy="10.300" r=".9" fill="#e8e8e8"/></svg></span><span style="left:53.2px;top:2px;font-size:9.2px;color:#111;transform:scaleX(0.955);transform-origin:0 0;">MACD Sample</span></div>
<div class="nr" style="top:108.26px"><span class="nic" style="left:36px"><svg class="ni" viewBox="0 0 14 13"><path d="M3 8 q0 3.500 3.500 3.500 q3.500 0 3.500 -3.500 l-3.500 -1z" fill="#ecc83a"/><path d="M4.500 9.500 q2 1.500 4 0" stroke="#d8882a" stroke-width="1" fill="none"/><ellipse cx="6.500" cy="5.800" rx="6.200" ry="2.600" fill="#3a9ae0"/><ellipse cx="6.500" cy="3.800" rx="3.800" ry="2.800" fill="#4aa8ea"/><ellipse cx="6" cy="3" rx="2" ry="1" fill="#8fd0f8"/><circle cx="10.800" cy="10.300" r="2.200" fill="#8a8a8a"/><circle cx="10.800" cy="10.300" r=".9" fill="#e8e8e8"/></svg></span><span style="left:53.2px;top:2px;font-size:9.2px;color:#111;transform:scaleX(0.955);transform-origin:0 0;">Moving Average</span></div>
<div class="nr" style="top:121.88px"><span class="nic" style="left:36px"><svg class="ni" viewBox="0 0 14 13"><path d="M3 8 q0 3.500 3.500 3.500 q3.500 0 3.500 -3.500 l-3.500 -1z" fill="#ecc83a"/><path d="M4.500 9.500 q2 1.500 4 0" stroke="#d8882a" stroke-width="1" fill="none"/><ellipse cx="6.500" cy="5.800" rx="6.200" ry="2.600" fill="#3a9ae0"/><ellipse cx="6.500" cy="3.800" rx="3.800" ry="2.800" fill="#4aa8ea"/><ellipse cx="6" cy="3" rx="2" ry="1" fill="#8fd0f8"/><circle cx="10.800" cy="10.300" r="2.200" fill="#8a8a8a"/><circle cx="10.800" cy="10.300" r=".9" fill="#e8e8e8"/></svg></span><span style="left:53.2px;top:2px;font-size:9.2px;color:#111;transform:scaleX(0.955);transform-origin:0 0;">Vantage FX - Alarm Manage</span></div>
<div class="nr" style="top:135.50px"><span class="nic" style="left:36px"><svg class="ni" viewBox="0 0 14 13"><path d="M3 8 q0 3.500 3.500 3.500 q3.500 0 3.500 -3.500 l-3.500 -1z" fill="#ecc83a"/><path d="M4.500 9.500 q2 1.500 4 0" stroke="#d8882a" stroke-width="1" fill="none"/><ellipse cx="6.500" cy="5.800" rx="6.200" ry="2.600" fill="#3a9ae0"/><ellipse cx="6.500" cy="3.800" rx="3.800" ry="2.800" fill="#4aa8ea"/><ellipse cx="6" cy="3" rx="2" ry="1" fill="#8fd0f8"/><circle cx="10.800" cy="10.300" r="2.200" fill="#8a8a8a"/><circle cx="10.800" cy="10.300" r=".9" fill="#e8e8e8"/></svg></span><span style="left:53.2px;top:2px;font-size:9.2px;color:#111;transform:scaleX(0.955);transform-origin:0 0;">Vantage FX - Connect</span></div>
<div class="nr" style="top:149.12px"><span class="nic" style="left:36px"><svg class="ni" viewBox="0 0 14 13"><path d="M3 8 q0 3.500 3.500 3.500 q3.500 0 3.500 -3.500 l-3.500 -1z" fill="#ecc83a"/><path d="M4.500 9.500 q2 1.500 4 0" stroke="#d8882a" stroke-width="1" fill="none"/><ellipse cx="6.500" cy="5.800" rx="6.200" ry="2.600" fill="#3a9ae0"/><ellipse cx="6.500" cy="3.800" rx="3.800" ry="2.800" fill="#4aa8ea"/><ellipse cx="6" cy="3" rx="2" ry="1" fill="#8fd0f8"/><circle cx="10.800" cy="10.300" r="2.200" fill="#8a8a8a"/><circle cx="10.800" cy="10.300" r=".9" fill="#e8e8e8"/></svg></span><span style="left:53.2px;top:2px;font-size:9.2px;color:#111;transform:scaleX(0.955);transform-origin:0 0;">Vantage FX - Correlation Ma</span></div>
<div class="nr" style="top:162.74px"><span class="nic" style="left:36px"><svg class="ni" viewBox="0 0 14 13"><path d="M3 8 q0 3.500 3.500 3.500 q3.500 0 3.500 -3.500 l-3.500 -1z" fill="#ecc83a"/><path d="M4.500 9.500 q2 1.500 4 0" stroke="#d8882a" stroke-width="1" fill="none"/><ellipse cx="6.500" cy="5.800" rx="6.200" ry="2.600" fill="#3a9ae0"/><ellipse cx="6.500" cy="3.800" rx="3.800" ry="2.800" fill="#4aa8ea"/><ellipse cx="6" cy="3" rx="2" ry="1" fill="#8fd0f8"/><circle cx="10.800" cy="10.300" r="2.200" fill="#8a8a8a"/><circle cx="10.800" cy="10.300" r=".9" fill="#e8e8e8"/></svg></span><span style="left:53.2px;top:2px;font-size:9.2px;color:#111;transform:scaleX(0.955);transform-origin:0 0;">Vantage FX - Correlation Tra</span></div>
<div class="nr" style="top:176.36px"><span class="nic" style="left:36px"><svg class="ni" viewBox="0 0 14 13"><path d="M3 8 q0 3.500 3.500 3.500 q3.500 0 3.500 -3.500 l-3.500 -1z" fill="#ecc83a"/><path d="M4.500 9.500 q2 1.500 4 0" stroke="#d8882a" stroke-width="1" fill="none"/><ellipse cx="6.500" cy="5.800" rx="6.200" ry="2.600" fill="#3a9ae0"/><ellipse cx="6.500" cy="3.800" rx="3.800" ry="2.800" fill="#4aa8ea"/><ellipse cx="6" cy="3" rx="2" ry="1" fill="#8fd0f8"/><circle cx="10.800" cy="10.300" r="2.200" fill="#8a8a8a"/><circle cx="10.800" cy="10.300" r=".9" fill="#e8e8e8"/></svg></span><span style="left:53.2px;top:2px;font-size:9.2px;color:#111;transform:scaleX(0.955);transform-origin:0 0;">Vantage FX - Excel RTD</span></div>
  <div class="sb" style="left:162.500px;top:0;width:13.500px;height:185px">
    <svg style="left:2.500px;top:4.500px;width:7px;height:5px" viewBox="0 0 7 5"><path d="M.5 4 L3.500 1 L6.500 4" stroke="#555" fill="none" stroke-width="1"/></svg>
    <div class="thumb" style="left:1px;top:13.500px;width:11px;height:51px"></div>
    <div style="left:4px;top:38px;width:5px;height:1px;background:#555"></div>
    <div style="left:4px;top:40px;width:5px;height:1px;background:#555"></div>
    <div style="left:4px;top:42px;width:5px;height:1px;background:#555"></div>
    <svg style="left:2.500px;top:174.500px;width:7px;height:5px" viewBox="0 0 7 5"><path d="M.5 1 L3.500 4 L6.500 1" stroke="#555" fill="none" stroke-width="1"/></svg>
  </div>
</div>
<div style="left:0;top:489.200px;width:177px;height:20px;background:#f0f0f0;border-top:1px solid #555"></div>
<div style="left:2.500px;top:488.700px;width:53.500px;height:15px;background:#fbfbfb;border:1px solid #444;border-top:none;box-shadow:1px 1px 0 #999"></div>
<span style="left:10.9px;top:490.800px;font-size:9.4px;color:#111;transform:scaleX(0.981);transform-origin:0 0;">Common</span>
<span style="left:63.9px;top:490.800px;font-size:9.4px;color:#9a9a9a;transform:scaleX(0.911);transform-origin:0 0;">Favorites</span>
<div style="left:107px;top:492.400px;width:1px;height:9.500px;background:#9a9a9a"></div>

<!-- CHART -->
<div id="chart"></div>
<svg id="cs" style="left:0;top:0;width:1024px;height:547px" viewBox="0 0 1024 547">
  <rect x="180" y="73" width="844" height="1" fill="#444"/>
  <path d="M183.300 76 V476.300 H993.500 V76" stroke="#b4b4b4" stroke-width="1.300" fill="none"/>
  <rect x="183" y="75.500" width="811" height="1.100" fill="#8c8c8c"/>
  <path d="M899 75 h9 l-4.500 4.500z" fill="#8fa3b3"/>
  <line x1="184" y1="226" x2="993" y2="226" style="stroke:#808080;stroke-width:1.100"/>
  <text class="pl" x="186" y="84.900" style="fill:#f0f0f0" textLength="153" lengthAdjust="spacingAndGlyphs" xml:space="preserve">AUDUSD,H1  0.74916 0.74975 0.74880 0.74909</text>
<g id="cd">
<line x1="183.0" y1="262.2" x2="183.0" y2="286.5"/>
<rect class="h" x="181.3" y="273.7" width="3.4" height="7.0"/>
<line x1="189.0" y1="266.0" x2="189.0" y2="287.1"/>
<rect class="f" x="187.5" y="273.0" width="3.0" height="5.8"/>
<line x1="195.0" y1="271.1" x2="195.0" y2="291.6"/>
<rect class="f" x="193.5" y="278.8" width="3.0" height="12.2"/>
<line x1="201.1" y1="285.2" x2="201.1" y2="312.7"/>
<rect class="f" x="199.6" y="290.3" width="3.0" height="3.2"/>
<line x1="207.1" y1="288.4" x2="207.1" y2="308.9"/>
<rect class="f" x="205.6" y="292.9" width="3.0" height="9.0"/>
<line x1="213.2" y1="284.3" x2="213.2" y2="301.9"/>
<rect class="h" x="211.5" y="285.2" width="3.4" height="16.7"/>
<line x1="219.2" y1="285.2" x2="219.2" y2="300.6"/>
<rect class="f" x="217.7" y="285.6" width="3.0" height="8.6"/>
<line x1="225.2" y1="289.0" x2="225.2" y2="301.9"/>
<rect class="d" x="223.7" y="293.4" width="3.0" height="1.6"/>
<line x1="231.3" y1="277.5" x2="231.3" y2="297.4"/>
<rect class="h" x="229.6" y="285.2" width="3.4" height="10.9"/>
<line x1="237.3" y1="261.8" x2="237.3" y2="286.5"/>
<rect class="h" x="235.6" y="262.8" width="3.4" height="23.4"/>
<line x1="243.4" y1="259.0" x2="243.4" y2="285.2"/>
<rect class="f" x="241.9" y="262.8" width="3.0" height="13.2"/>
<line x1="249.4" y1="267.3" x2="249.4" y2="282.0"/>
<rect class="f" x="247.9" y="275.6" width="3.0" height="2.6"/>
<line x1="255.4" y1="276.2" x2="255.4" y2="295.5"/>
<rect class="f" x="253.9" y="277.5" width="3.0" height="16.0"/>
<line x1="261.5" y1="287.1" x2="261.5" y2="303.1"/>
<rect class="f" x="260.0" y="292.9" width="3.0" height="9.6"/>
<line x1="267.5" y1="293.5" x2="267.5" y2="310.2"/>
<rect class="h" x="265.8" y="298.0" width="3.4" height="3.9"/>
<line x1="273.6" y1="287.1" x2="273.6" y2="307.6"/>
<rect class="f" x="272.1" y="298.0" width="3.0" height="2.8"/>
<line x1="279.6" y1="297.7" x2="279.6" y2="349.5"/>
<rect class="f" x="278.1" y="300.2" width="3.0" height="46.1"/>
<line x1="285.6" y1="332.9" x2="285.6" y2="355.9"/>
<rect class="h" x="283.9" y="336.1" width="3.4" height="10.2"/>
<line x1="291.7" y1="334.8" x2="291.7" y2="347.0"/>
<rect class="d" x="290.2" y="336.7" width="3.0" height="1.5"/>
<line x1="297.7" y1="335.4" x2="297.7" y2="359.8"/>
<rect class="f" x="296.2" y="336.1" width="3.0" height="21.7"/>
<line x1="303.8" y1="339.9" x2="303.8" y2="361.7"/>
<rect class="h" x="302.1" y="350.2" width="3.4" height="7.6"/>
<line x1="309.8" y1="338.0" x2="309.8" y2="359.8"/>
<rect class="h" x="308.1" y="342.2" width="3.4" height="8.6"/>
<line x1="315.8" y1="342.0" x2="315.8" y2="365.3"/>
<rect class="f" x="314.3" y="342.6" width="3.0" height="22.4"/>
<line x1="321.9" y1="344.2" x2="321.9" y2="366.9"/>
<rect class="h" x="320.2" y="349.9" width="3.4" height="16.7"/>
<line x1="327.9" y1="344.8" x2="327.9" y2="355.3"/>
<rect class="d" x="326.4" y="349.2" width="3.0" height="1.4"/>
<line x1="334.0" y1="335.5" x2="334.0" y2="350.2"/>
<rect class="h" x="332.3" y="336.1" width="3.4" height="13.8"/>
<line x1="340.0" y1="331.6" x2="340.0" y2="343.8"/>
<rect class="h" x="338.3" y="333.5" width="3.4" height="3.6"/>
<line x1="346.0" y1="307.9" x2="346.0" y2="338.7"/>
<rect class="h" x="344.3" y="315.2" width="3.4" height="19.6"/>
<line x1="352.1" y1="305.4" x2="352.1" y2="321.4"/>
<rect class="h" x="350.4" y="309.2" width="3.4" height="6.4"/>
<line x1="358.1" y1="300.2" x2="358.1" y2="313.0"/>
<rect class="h" x="356.4" y="301.5" width="3.4" height="9.0"/>
<line x1="364.2" y1="300.2" x2="364.2" y2="318.8"/>
<rect class="f" x="362.7" y="302.8" width="3.0" height="9.0"/>
<line x1="370.2" y1="295.1" x2="370.2" y2="316.9"/>
<rect class="h" x="368.5" y="301.8" width="3.4" height="10.6"/>
<line x1="376.2" y1="295.8" x2="376.2" y2="307.9"/>
<rect class="h" x="374.5" y="298.7" width="3.4" height="4.1"/>
<line x1="382.3" y1="291.3" x2="382.3" y2="308.6"/>
<rect class="h" x="380.6" y="294.9" width="3.4" height="4.7"/>
<line x1="388.3" y1="288.2" x2="388.3" y2="303.6"/>
<rect class="f" x="386.8" y="294.0" width="3.0" height="8.9"/>
<line x1="394.4" y1="292.0" x2="394.4" y2="305.5"/>
<rect class="h" x="392.7" y="292.9" width="3.4" height="10.0"/>
<line x1="400.4" y1="291.1" x2="400.4" y2="301.0"/>
<rect class="f" x="398.9" y="293.7" width="3.0" height="5.4"/>
<line x1="406.4" y1="297.8" x2="406.4" y2="311.2"/>
<rect class="f" x="404.9" y="298.8" width="3.0" height="10.3"/>
<line x1="412.5" y1="293.3" x2="412.5" y2="312.9"/>
<rect class="h" x="410.8" y="297.2" width="3.4" height="11.5"/>
<line x1="418.5" y1="294.2" x2="418.5" y2="310.0"/>
<rect class="f" x="417.0" y="297.2" width="3.0" height="10.8"/>
<line x1="424.6" y1="304.8" x2="424.6" y2="336.0"/>
<rect class="f" x="423.1" y="306.8" width="3.0" height="27.5"/>
<line x1="430.6" y1="329.2" x2="430.6" y2="348.0"/>
<rect class="f" x="429.1" y="333.4" width="3.0" height="7.3"/>
<line x1="436.6" y1="321.5" x2="436.6" y2="344.2"/>
<rect class="h" x="434.9" y="332.1" width="3.4" height="8.0"/>
<line x1="442.7" y1="329.2" x2="442.7" y2="334.7"/>
<rect class="d" x="441.2" y="332.4" width="3.0" height="1.6"/>
<line x1="448.7" y1="325.0" x2="448.7" y2="338.5"/>
<rect class="h" x="447.0" y="326.0" width="3.4" height="8.3"/>
<line x1="454.8" y1="310.0" x2="454.8" y2="329.6"/>
<rect class="h" x="453.1" y="311.9" width="3.4" height="15.4"/>
<line x1="460.8" y1="307.0" x2="460.8" y2="317.7"/>
<rect class="d" x="459.3" y="311.9" width="3.0" height="1.9"/>
<line x1="466.8" y1="310.0" x2="466.8" y2="316.4"/>
<rect class="h" x="465.1" y="310.4" width="3.4" height="5.6"/>
<line x1="472.9" y1="304.8" x2="472.9" y2="316.8"/>
<rect class="h" x="471.2" y="305.5" width="3.4" height="4.5"/>
<line x1="478.9" y1="295.9" x2="478.9" y2="308.7"/>
<rect class="h" x="477.2" y="297.8" width="3.4" height="9.0"/>
<line x1="485.0" y1="298.4" x2="485.0" y2="313.4"/>
<rect class="f" x="483.5" y="298.8" width="3.0" height="14.4"/>
<line x1="491.0" y1="292.7" x2="491.0" y2="315.7"/>
<rect class="h" x="489.3" y="293.3" width="3.4" height="19.2"/>
<line x1="497.0" y1="289.6" x2="497.0" y2="299.3"/>
<rect class="h" x="495.3" y="291.8" width="3.4" height="2.9"/>
<line x1="503.1" y1="281.4" x2="503.1" y2="292.9"/>
<rect class="h" x="501.4" y="290.0" width="3.4" height="2.6"/>
<line x1="509.1" y1="289.7" x2="509.1" y2="298.7"/>
<rect class="f" x="507.6" y="290.3" width="3.0" height="5.2"/>
<line x1="515.2" y1="292.9" x2="515.2" y2="313.4"/>
<rect class="f" x="513.7" y="294.8" width="3.0" height="15.4"/>
<line x1="521.2" y1="297.4" x2="521.2" y2="314.7"/>
<rect class="h" x="519.5" y="305.7" width="3.4" height="5.1"/>
<line x1="527.2" y1="283.9" x2="527.2" y2="308.9"/>
<rect class="h" x="525.5" y="288.4" width="3.4" height="17.9"/>
<line x1="533.3" y1="276.9" x2="533.3" y2="296.7"/>
<rect class="h" x="531.6" y="279.4" width="3.4" height="8.8"/>
<line x1="539.3" y1="278.8" x2="539.3" y2="290.3"/>
<rect class="f" x="537.8" y="279.7" width="3.0" height="6.8"/>
<line x1="545.4" y1="265.4" x2="545.4" y2="287.1"/>
<rect class="h" x="543.7" y="267.9" width="3.4" height="18.6"/>
<line x1="551.4" y1="264.7" x2="551.4" y2="280.5"/>
<rect class="f" x="549.9" y="268.2" width="3.0" height="5.1"/>
<line x1="557.4" y1="264.1" x2="557.4" y2="276.2"/>
<rect class="d" x="555.9" y="274.1" width="3.0" height="1.5"/>
<line x1="563.5" y1="260.9" x2="563.5" y2="280.7"/>
<rect class="h" x="561.8" y="261.8" width="3.4" height="13.8"/>
<line x1="569.5" y1="253.8" x2="569.5" y2="273.0"/>
<rect class="f" x="568.0" y="262.2" width="3.0" height="7.3"/>
<line x1="575.6" y1="259.6" x2="575.6" y2="274.3"/>
<rect class="h" x="573.9" y="265.4" width="3.4" height="5.1"/>
<line x1="581.6" y1="265.4" x2="581.6" y2="283.5"/>
<rect class="f" x="580.1" y="266.0" width="3.0" height="16.7"/>
<line x1="587.6" y1="275.0" x2="587.6" y2="287.1"/>
<rect class="h" x="585.9" y="276.2" width="3.4" height="7.1"/>
<line x1="593.7" y1="266.9" x2="593.7" y2="277.5"/>
<rect class="h" x="592.0" y="268.6" width="3.4" height="8.5"/>
<line x1="599.7" y1="264.7" x2="599.7" y2="274.3"/>
<rect class="f" x="598.2" y="268.2" width="3.0" height="2.3"/>
<line x1="605.8" y1="259.0" x2="605.8" y2="271.0"/>
<rect class="h" x="604.1" y="259.3" width="3.4" height="11.4"/>
<line x1="611.8" y1="253.7" x2="611.8" y2="267.5"/>
<rect class="f" x="610.3" y="260.1" width="3.0" height="6.2"/>
<line x1="617.8" y1="259.4" x2="617.8" y2="266.9"/>
<rect class="h" x="616.1" y="259.7" width="3.4" height="6.8"/>
<line x1="623.9" y1="241.3" x2="623.9" y2="262.7"/>
<rect class="h" x="622.2" y="246.0" width="3.4" height="16.0"/>
<line x1="629.9" y1="245.1" x2="629.9" y2="257.5"/>
<rect class="f" x="628.4" y="246.0" width="3.0" height="10.2"/>
<line x1="636.0" y1="252.8" x2="636.0" y2="269.0"/>
<rect class="f" x="634.5" y="255.6" width="3.0" height="10.9"/>
<line x1="642.0" y1="256.2" x2="642.0" y2="267.8"/>
<rect class="h" x="640.3" y="261.8" width="3.4" height="4.7"/>
<line x1="648.0" y1="260.5" x2="648.0" y2="275.5"/>
<rect class="f" x="646.5" y="261.4" width="3.0" height="13.2"/>
<line x1="654.1" y1="269.0" x2="654.1" y2="276.4"/>
<rect class="h" x="652.4" y="270.3" width="3.4" height="3.9"/>
<line x1="660.1" y1="269.0" x2="660.1" y2="281.9"/>
<rect class="f" x="658.6" y="270.7" width="3.0" height="10.5"/>
<line x1="666.2" y1="272.9" x2="666.2" y2="288.9"/>
<rect class="h" x="664.5" y="273.5" width="3.4" height="7.7"/>
<line x1="672.2" y1="273.5" x2="672.2" y2="324.4"/>
<rect class="f" x="670.7" y="274.1" width="3.0" height="4.7"/>
<line x1="678.2" y1="265.6" x2="678.2" y2="280.6"/>
<rect class="h" x="676.5" y="266.1" width="3.4" height="11.9"/>
<line x1="684.3" y1="259.4" x2="684.3" y2="272.9"/>
<rect class="h" x="682.6" y="264.3" width="3.4" height="2.6"/>
<line x1="690.3" y1="252.4" x2="690.3" y2="267.8"/>
<rect class="h" x="688.6" y="254.1" width="3.4" height="9.8"/>
<line x1="696.4" y1="251.5" x2="696.4" y2="270.0"/>
<rect class="f" x="694.9" y="254.3" width="3.0" height="15.1"/>
<line x1="702.4" y1="265.9" x2="702.4" y2="278.0"/>
<rect class="f" x="700.9" y="269.7" width="3.0" height="3.8"/>
<line x1="708.4" y1="265.9" x2="708.4" y2="278.0"/>
<rect class="d" x="706.9" y="270.7" width="3.0" height="2.2"/>
<line x1="714.5" y1="257.5" x2="714.5" y2="281.9"/>
<rect class="h" x="712.8" y="258.2" width="3.4" height="13.4"/>
<line x1="720.5" y1="249.2" x2="720.5" y2="275.3"/>
<rect class="f" x="719.0" y="258.4" width="3.0" height="16.1"/>
<line x1="726.6" y1="259.0" x2="726.6" y2="278.3"/>
<rect class="h" x="724.9" y="263.5" width="3.4" height="11.6"/>
<line x1="732.6" y1="260.3" x2="732.6" y2="282.1"/>
<rect class="f" x="731.1" y="263.5" width="3.0" height="3.2"/>
<line x1="738.6" y1="258.4" x2="738.6" y2="273.1"/>
<rect class="h" x="736.9" y="262.9" width="3.4" height="5.1"/>
<line x1="744.7" y1="252.0" x2="744.7" y2="266.1"/>
<rect class="h" x="743.0" y="252.7" width="3.4" height="10.8"/>
<line x1="750.7" y1="252.3" x2="750.7" y2="261.0"/>
<rect class="f" x="749.2" y="253.0" width="3.0" height="7.0"/>
<line x1="756.8" y1="259.0" x2="756.8" y2="270.0"/>
<rect class="f" x="755.3" y="261.2" width="3.0" height="5.5"/>
<line x1="762.8" y1="257.4" x2="762.8" y2="266.7"/>
<rect class="h" x="761.1" y="261.2" width="3.4" height="5.5"/>
<line x1="768.8" y1="257.1" x2="768.8" y2="264.2"/>
<rect class="f" x="767.3" y="261.2" width="3.0" height="2.6"/>
<line x1="774.9" y1="256.1" x2="774.9" y2="264.8"/>
<rect class="h" x="773.2" y="260.0" width="3.4" height="3.3"/>
<line x1="780.9" y1="255.2" x2="780.9" y2="271.0"/>
<rect class="f" x="779.4" y="260.0" width="3.0" height="5.5"/>
<line x1="787.0" y1="253.5" x2="787.0" y2="266.7"/>
<rect class="h" x="785.3" y="254.8" width="3.4" height="11.3"/>
<line x1="793.0" y1="245.4" x2="793.0" y2="256.5"/>
<rect class="h" x="791.3" y="251.4" width="3.4" height="4.5"/>
<line x1="799.0" y1="244.3" x2="799.0" y2="257.4"/>
<rect class="h" x="797.3" y="246.2" width="3.4" height="5.8"/>
<line x1="805.1" y1="245.6" x2="805.1" y2="253.3"/>
<rect class="f" x="803.6" y="246.2" width="3.0" height="6.5"/>
<line x1="811.1" y1="249.7" x2="811.1" y2="266.1"/>
<rect class="f" x="809.6" y="252.7" width="3.0" height="2.5"/>
<line x1="817.2" y1="246.2" x2="817.2" y2="257.4"/>
<rect class="h" x="815.5" y="252.3" width="3.4" height="3.6"/>
<line x1="823.2" y1="229.6" x2="823.2" y2="253.3"/>
<rect class="h" x="821.5" y="230.2" width="3.4" height="21.8"/>
<line x1="829.2" y1="228.7" x2="829.2" y2="241.0"/>
<rect class="f" x="827.7" y="230.3" width="3.0" height="10.2"/>
<line x1="835.3" y1="232.7" x2="835.3" y2="246.7"/>
<rect class="h" x="833.6" y="233.9" width="3.4" height="7.1"/>
<line x1="841.3" y1="225.6" x2="841.3" y2="237.8"/>
<rect class="h" x="839.6" y="233.0" width="3.4" height="2.6"/>
<line x1="847.4" y1="229.2" x2="847.4" y2="238.4"/>
<rect class="f" x="845.9" y="231.4" width="3.0" height="2.5"/>
<line x1="853.4" y1="216.0" x2="853.4" y2="235.9"/>
<rect class="h" x="851.7" y="223.3" width="3.4" height="9.4"/>
<line x1="859.4" y1="221.1" x2="859.4" y2="241.6"/>
<rect class="f" x="857.9" y="223.3" width="3.0" height="10.2"/>
<line x1="865.5" y1="229.2" x2="865.5" y2="238.4"/>
<rect class="h" x="863.8" y="231.4" width="3.4" height="2.5"/>
<line x1="871.5" y1="226.9" x2="871.5" y2="237.1"/>
<rect class="d" x="870.0" y="231.4" width="3.0" height="1.6"/>
<line x1="877.6" y1="225.6" x2="877.6" y2="233.3"/>
<rect class="d" x="876.1" y="231.8" width="3.0" height="1.5"/>
<line x1="883.6" y1="229.2" x2="883.6" y2="235.9"/>
<rect class="d" x="882.1" y="231.4" width="3.0" height="2.1"/>
<line x1="889.6" y1="223.0" x2="889.6" y2="235.6"/>
<rect class="h" x="887.9" y="224.6" width="3.4" height="8.9"/>
<line x1="895.7" y1="220.2" x2="895.7" y2="228.8"/>
<rect class="d" x="894.2" y="225.0" width="3.0" height="1.9"/>
</g>
<line class="ax" x1="993" y1="100.2" x2="996" y2="100.2"/><text class="pl" x="997.8" y="103.0" textLength="24.2" lengthAdjust="spacingAndGlyphs">0.76445</text>
<line class="ax" x1="993" y1="125.1" x2="996" y2="125.1"/><text class="pl" x="997.8" y="127.9" textLength="24.2" lengthAdjust="spacingAndGlyphs">0.76140</text>
<line class="ax" x1="993" y1="150.1" x2="996" y2="150.1"/><text class="pl" x="997.8" y="152.9" textLength="24.2" lengthAdjust="spacingAndGlyphs">0.75835</text>
<line class="ax" x1="993" y1="175.0" x2="996" y2="175.0"/><text class="pl" x="997.8" y="177.8" textLength="24.2" lengthAdjust="spacingAndGlyphs">0.75530</text>
<line class="ax" x1="993" y1="199.9" x2="996" y2="199.9"/><text class="pl" x="997.8" y="202.7" textLength="24.2" lengthAdjust="spacingAndGlyphs">0.75225</text>
<line class="ax" x1="993" y1="249.8" x2="996" y2="249.8"/><text class="pl" x="997.8" y="252.6" textLength="24.2" lengthAdjust="spacingAndGlyphs">0.74610</text>
<line class="ax" x1="993" y1="274.7" x2="996" y2="274.7"/><text class="pl" x="997.8" y="277.5" textLength="24.2" lengthAdjust="spacingAndGlyphs">0.74305</text>
<line class="ax" x1="993" y1="299.6" x2="996" y2="299.6"/><text class="pl" x="997.8" y="302.4" textLength="24.2" lengthAdjust="spacingAndGlyphs">0.74000</text>
<line class="ax" x1="993" y1="324.6" x2="996" y2="324.6"/><text class="pl" x="997.8" y="327.4" textLength="24.2" lengthAdjust="spacingAndGlyphs">0.73695</text>
<line class="ax" x1="993" y1="349.5" x2="996" y2="349.5"/><text class="pl" x="997.8" y="352.3" textLength="24.2" lengthAdjust="spacingAndGlyphs">0.73390</text>
<line class="ax" x1="993" y1="374.4" x2="996" y2="374.4"/><text class="pl" x="997.8" y="377.2" textLength="24.2" lengthAdjust="spacingAndGlyphs">0.73085</text>
<line class="ax" x1="993" y1="399.4" x2="996" y2="399.4"/><text class="pl" x="997.8" y="402.2" textLength="24.2" lengthAdjust="spacingAndGlyphs">0.72780</text>
<line class="ax" x1="993" y1="424.3" x2="996" y2="424.3"/><text class="pl" x="997.8" y="427.1" textLength="24.2" lengthAdjust="spacingAndGlyphs">0.72470</text>
<line class="ax" x1="993" y1="449.2" x2="996" y2="449.2"/><text class="pl" x="997.8" y="452.0" textLength="24.2" lengthAdjust="spacingAndGlyphs">0.72165</text>
<line class="ax" x1="993" y1="474.1" x2="996" y2="474.1"/><text class="pl" x="997.8" y="476.9" textLength="24.2" lengthAdjust="spacingAndGlyphs">0.71860</text>
<line class="ax" x1="183.3" y1="476" x2="183.3" y2="479.5"/><text class="pl" x="182.0" y="486.3" textLength="37.4" lengthAdjust="spacingAndGlyphs">27 Jun 2016</text>
<line class="ax" x1="231.7" y1="476" x2="231.7" y2="479.5"/><text class="pl" x="230.3" y="486.3" textLength="39.5" lengthAdjust="spacingAndGlyphs">27 Jun 09:00</text>
<line class="ax" x1="280.0" y1="476" x2="280.0" y2="479.5"/><text class="pl" x="278.7" y="486.3" textLength="39.5" lengthAdjust="spacingAndGlyphs">27 Jun 17:00</text>
<line class="ax" x1="328.4" y1="476" x2="328.4" y2="479.5"/><text class="pl" x="327.1" y="486.3" textLength="39.5" lengthAdjust="spacingAndGlyphs">28 Jun 01:00</text>
<line class="ax" x1="376.7" y1="476" x2="376.7" y2="479.5"/><text class="pl" x="375.4" y="486.3" textLength="39.5" lengthAdjust="spacingAndGlyphs">28 Jun 09:00</text>
<line class="ax" x1="425.1" y1="476" x2="425.1" y2="479.5"/><text class="pl" x="423.8" y="486.3" textLength="39.5" lengthAdjust="spacingAndGlyphs">28 Jun 17:00</text>
<line class="ax" x1="473.4" y1="476" x2="473.4" y2="479.5"/><text class="pl" x="472.1" y="486.3" textLength="39.5" lengthAdjust="spacingAndGlyphs">29 Jun 01:00</text>
<line class="ax" x1="521.8" y1="476" x2="521.8" y2="479.5"/><text class="pl" x="520.5" y="486.3" textLength="39.5" lengthAdjust="spacingAndGlyphs">29 Jun 09:00</text>
<line class="ax" x1="570.1" y1="476" x2="570.1" y2="479.5"/><text class="pl" x="568.8" y="486.3" textLength="39.5" lengthAdjust="spacingAndGlyphs">29 Jun 17:00</text>
<line class="ax" x1="618.5" y1="476" x2="618.5" y2="479.5"/><text class="pl" x="617.2" y="486.3" textLength="39.5" lengthAdjust="spacingAndGlyphs">30 Jun 01:00</text>
<line class="ax" x1="666.8" y1="476" x2="666.8" y2="479.5"/><text class="pl" x="665.5" y="486.3" textLength="39.5" lengthAdjust="spacingAndGlyphs">30 Jun 09:00</text>
<line class="ax" x1="715.2" y1="476" x2="715.2" y2="479.5"/><text class="pl" x="713.9" y="486.3" textLength="39.5" lengthAdjust="spacingAndGlyphs">30 Jun 17:00</text>
<line class="ax" x1="763.5" y1="476" x2="763.5" y2="479.5"/><text class="pl" x="762.2" y="486.3" textLength="33.2" lengthAdjust="spacingAndGlyphs">1 Jul 01:00</text>
<line class="ax" x1="811.9" y1="476" x2="811.9" y2="479.5"/><text class="pl" x="810.6" y="486.3" textLength="33.2" lengthAdjust="spacingAndGlyphs">1 Jul 09:00</text>
<line class="ax" x1="860.2" y1="476" x2="860.2" y2="479.5"/><text class="pl" x="858.9" y="486.3" textLength="33.2" lengthAdjust="spacingAndGlyphs">1 Jul 17:00</text>
  <rect x="995" y="222.500" width="29" height="7.500" fill="#f4f4f4"/>
  <text x="998.3" y="228.8" font-size="7.6" fill="#111" textLength="24.5" lengthAdjust="spacingAndGlyphs">0.74909</text>
  <circle cx="1009" cy="249.500" r="27" fill="none" stroke="#ecdc20" stroke-width="2.600"/>
  <path d="M1008.300 249.800 v13.500 l3.200 -3.200 2.700 6.200 2.300 -1 -2.700 -6 h4.200z" fill="#fff" stroke="#222" stroke-width=".7"/>
  <path d="M1020 258 l-2.500 3 h1.700 v4 h-1.700 l2.500 3 2.500 -3 h-1.700 v-4 h1.700z" fill="#fff" stroke="#333" stroke-width=".5"/>
</svg>
<div style="left:180px;top:491.500px;width:844px;height:1.500px;background:#8a8a8a"></div>

<!-- CHART TABS -->
<div id="ctabs">
  <span style="left:10.4px;top:1.600px;font-size:9.4px;color:#9a9a9a;transform:scaleX(0.921);transform-origin:0 0;">Vantage FX Home</span>
  <div style="left:90px;top:4px;width:1px;height:9px;background:#8a8a8a"></div>
  <span style="left:98.9px;top:1.600px;font-size:9.4px;color:#9a9a9a;transform:scaleX(0.838);transform-origin:0 0;">EURUSD,H4</span>
  <div style="left:153px;top:4px;width:1px;height:9px;background:#8a8a8a"></div>
  <span style="left:161.3px;top:1.600px;font-size:9.4px;color:#9a9a9a;transform:scaleX(0.929);transform-origin:0 0;">Vantage FX Connect</span>
  <div style="left:250px;top:4px;width:1px;height:9px;background:#8a8a8a"></div>
  <span style="left:258.6px;top:1.600px;font-size:9.4px;color:#9a9a9a;transform:scaleX(0.847);transform-origin:0 0;">GBPUSD,H4</span>
  <div style="left:313px;top:4px;width:1px;height:9px;background:#8a8a8a"></div>
  <span style="left:321.5px;top:1.600px;font-size:9.4px;color:#9a9a9a;transform:scaleX(0.861);transform-origin:0 0;">USDJPY,H4</span>
  <div style="left:374px;top:-1px;width:68px;height:16px;background:#fff;border:1px solid #555;border-top:none"></div>
  <span style="left:382.9px;top:1.600px;font-size:9.4px;color:#111;transform:scaleX(0.867);transform-origin:0 0;">AUDUSD,H1</span>
  <svg style="left:823px;top:5px;width:3px;height:5px" viewBox="0 0 4 6"><path d="M4 0 v6 l-4 -3z" fill="#b4b4b4"/></svg>
  <svg style="left:836px;top:5px;width:3px;height:5px" viewBox="0 0 4 6"><path d="M0 0 v6 l4 -3z" fill="#b4b4b4"/></svg>
</div>

<!-- TERMINAL -->
<div id="term">
  <div style="left:10.200px;top:2.600px;width:1014px;height:17.400px;background:#fff;border-top:1px solid #dadada"></div>
  <svg style="left:1px;top:4.500px;width:5px;height:5px" viewBox="0 0 5 5"><path d="M.5 .5 L4.500 4.500 M4.500 .5 L.5 4.500" stroke="#222" stroke-width="1.100"/></svg>
  <div style="left:1.500px;top:11.500px;width:4px;height:1px;background:#aaa"></div><div style="left:1.500px;top:13.500px;width:4px;height:1px;background:#aaa"></div><div style="left:1.500px;top:15.500px;width:4px;height:1px;background:#aaa"></div>
  <div style="left:14px;top:8.600px;width:5.200px;height:5.200px;border-radius:3px;background:#a4a4a4"></div>
  <span style="left:24.0px;top:5.700px;font-size:9.2px;color:#111;transform:scaleX(0.923);transform-origin:0 0;white-space:pre">Balance: 20 035.69 AUD  Profit/Loss: 0.00  Equity: 20 035.69  Free margin: 20 035.69</span>
</div>

<!-- STATUS -->
<div id="status">
  <span style="left:0.5px;top:3.600px;font-size:9.4px;color:#111;transform:scaleX(0.892);transform-origin:0 0;">For Help, press F1</span>
  <div class="sep" style="left:503px;top:3px;height:11px;background:#c4c4c4"></div>
  <span style="left:508.7px;top:3.600px;font-size:9.4px;color:#111;transform:scaleX(0.887);transform-origin:0 0;">Vantage FX</span>
  <div class="sep" style="left:591px;top:3px;height:11px;background:#c4c4c4"></div>
  <div class="sep" style="left:668px;top:3px;height:11px;background:#c4c4c4"></div>
  <div class="sep" style="left:721px;top:3px;height:11px;background:#c4c4c4"></div>
  <div class="sep" style="left:775px;top:3px;height:11px;background:#c4c4c4"></div>
  <div class="sep" style="left:826px;top:3px;height:11px;background:#c4c4c4"></div>
  <div class="sep" style="left:879px;top:3px;height:11px;background:#c4c4c4"></div>
  <div class="sep" style="left:931px;top:3px;height:11px;background:#c4c4c4"></div>
  <svg style="left:934px;top:4px;width:18px;height:9px" viewBox="0 0 18 9">
    <g stroke-width="1.250"><path d="M.5 0 v9 M2.500 0 v9 M4.500 0 v9 M6.500 0 v9" stroke="#4d7a1f"/><path d="M8.500 2 v7 M10.500 2 v7 M12.500 1 v8 M14.500 0 v9 M16.500 0 v9" stroke="#2a5aa8"/><path d="M.5 0 v3 M2.500 0 v4 M4.500 0 v3 M6.500 0 v4" stroke="#b8962a"/></g></svg>
  <span style="left:953.6px;top:3.600px;font-size:9.4px;color:#111;transform:scaleX(0.926);transform-origin:0 0;">12303/39 kb</span>
</div>

</div>
</body></html>
